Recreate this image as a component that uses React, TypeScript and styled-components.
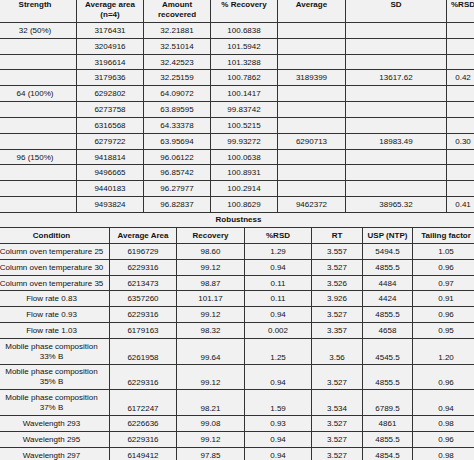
import React from "react";
import styled, { createGlobalStyle } from "styled-components";

const LINE = "#333333";
const PAPER = "#f1f1f1";

const GlobalStyle = createGlobalStyle`
  html, body {
    margin: 0;
    padding: 0;
    background: ${PAPER};
    overflow: hidden;
  }
  body {
    font-family: "Liberation Sans", Arial, sans-serif;
    font-size: 8px;
    color: #111111;
  }
`;

const Sheet = styled.div`
  display: flex;
  flex-direction: column;
  gap: 1px;
  width: 485px;
  margin-left: -6px;
  background: ${LINE};
`;

const UpperGrid = styled.div`
  display: grid;
  grid-template-columns: 82px 66px 66px 66px 67px 100px 32px;
  grid-template-rows: 22px repeat(12, 14.83px);
  gap: 1px;
`;

const LowerGrid = styled.div`
  display: grid;
  grid-template-columns: 115px 66px 67px 66px 50px 49px 66px;
  grid-template-rows: 15px repeat(6, 14.83px) repeat(3, 24.67px) repeat(3, 15px);
  gap: 1px;
`;

const SectionTitle = styled.div`
  height: 14px;
  display: flex;
  align-items: center;
  justify-content: center;
  background: ${PAPER};
  font-weight: bold;
  padding-left: 4px;
`;

type Align = "center" | "top" | "bottom";

const Cell = styled.div<{ $head?: boolean; $align?: Align }>`
  display: flex;
  justify-content: center;
  align-items: ${(p) =>
    p.$align === "top" ? "flex-start" : p.$align === "bottom" ? "flex-end" : "center"};
  padding-bottom: ${(p) => (p.$align === "bottom" ? "1px" : "0")};
  padding-top: ${(p) => (p.$align === "center" || !p.$align ? "1px" : "0")};
  background: ${PAPER};
  text-align: center;
  line-height: 10px;
  white-space: nowrap;
  font-weight: ${(p) => (p.$head ? "bold" : "normal")};
`;

const upperHead = ["Strength", "Average area\n(n=4)", "Amount\nrecovered", "% Recovery", "Average", "SD", "%RSD"];

const upperRows: string[][] = [
  ["32 (50%)", "3176431", "32.21881", "100.6838", "", "", ""],
  ["", "3204916", "32.51014", "101.5942", "", "", ""],
  ["", "3196614", "32.42523", "101.3288", "", "", ""],
  ["", "3179636", "32.25159", "100.7862", "3189399", "13617.62", "0.42"],
  ["64 (100%)", "6292802", "64.09072", "100.1417", "", "", ""],
  ["", "6273758", "63.89595", "99.83742", "", "", ""],
  ["", "6316568", "64.33378", "100.5215", "", "", ""],
  ["", "6279722", "63.95694", "99.93272", "6290713", "18983.49", "0.30"],
  ["96 (150%)", "9418814", "96.06122", "100.0638", "", "", ""],
  ["", "9496665", "96.85742", "100.8931", "", "", ""],
  ["", "9440183", "96.27977", "100.2914", "", "", ""],
  ["", "9493824", "96.82837", "100.8629", "9462372", "38965.32", "0.41"],
];

const lowerHead = ["Condition", "Average Area", "Recovery", "%RSD", "RT", "USP (NTP)", "Tailing factor"];

const lowerRows: string[][] = [
  ["Column oven temperature 25", "6196729", "98.60", "1.29", "3.557", "5494.5", "1.05"],
  ["Column oven temperature 30", "6229316", "99.12", "0.94", "3.527", "4855.5", "0.96"],
  ["Column oven temperature 35", "6213473", "98.87", "0.11", "3.526", "4484", "0.97"],
  ["Flow rate 0.83", "6357260", "101.17", "0.11", "3.926", "4424", "0.91"],
  ["Flow rate 0.93", "6229316", "99.12", "0.94", "3.527", "4855.5", "0.96"],
  ["Flow rate 1.03", "6179163", "98.32", "0.002", "3.357", "4658", "0.95"],
  ["Mobile phase composition\n33% B", "6261958", "99.64", "1.25", "3.56", "4545.5", "1.20"],
  ["Mobile phase composition\n35% B", "6229316", "99.12", "0.94", "3.527", "4855.5", "0.96"],
  ["Mobile phase composition\n37% B", "6172247", "98.21", "1.59", "3.534", "6789.5", "0.94"],
  ["Wavelength 293", "6226636", "99.08", "0.93", "3.527", "4861", "0.98"],
  ["Wavelength 295", "6229316", "99.12", "0.94", "3.527", "4855.5", "0.96"],
  ["Wavelength 297", "6149412", "97.85", "0.94", "3.527", "4854.5", "0.98"],
];

const Lines = ({ text }: { text: string }) => (
  <span>
    {text.split("\n").map((t, i) => (
      <React.Fragment key={i}>
        {i > 0 && <br />}
        {t}
      </React.Fragment>
    ))}
  </span>
);

const App = () => {
  return (
    <>
      <GlobalStyle />
      <Sheet>
        <UpperGrid>
          {upperHead.map((h) => (
            <Cell key={h} $head $align="top">
              <Lines text={h} />
            </Cell>
          ))}
          {upperRows.map((row, r) =>
            row.map((v, c) => <Cell key={`${r}-${c}`}>{v}</Cell>)
          )}
        </UpperGrid>
        <SectionTitle>Robustness</SectionTitle>
        <LowerGrid>
          {lowerHead.map((h) => (
            <Cell key={h} $head>
              {h}
            </Cell>
          ))}
          {lowerRows.map((row, r) => {
            // two-line condition rows: numbers sit on the second line
            const tall = row[0].includes("\n");
            return row.map((v, c) => (
              <Cell key={`${r}-${c}`} $align={tall && c > 0 ? "bottom" : "center"}>
                <Lines text={v} />
              </Cell>
            ));
          })}
        </LowerGrid>
      </Sheet>
    </>
  );
};

export default App;
